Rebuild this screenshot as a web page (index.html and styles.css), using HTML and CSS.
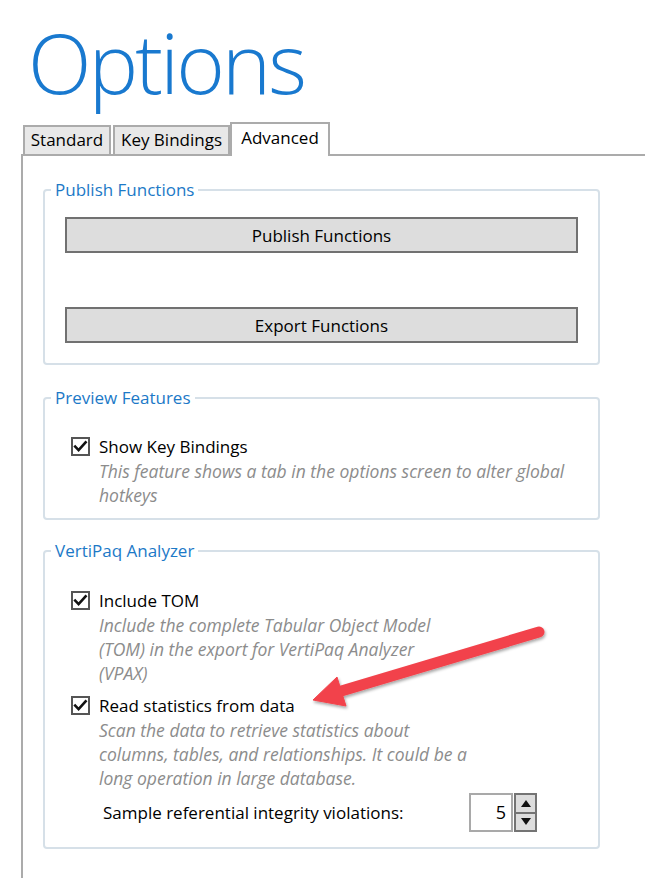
FILE: index.html
```html
<!DOCTYPE html>
<html>
<head>
<meta charset="utf-8">
<link rel="stylesheet" href="styles.css">
</head>
<body>
<div class="page">
  <div class="title-block"><h1 class="title">Options</h1></div>
  <div class="tabs">
    <div class="tab tab-standard">Standard</div>
    <div class="tab tab-keys">Key Bindings</div>
    <div class="tab tab-adv active">Advanced</div>
  </div>
  <div class="panel">
    <fieldset class="group group-publish">
      <legend>Publish Functions</legend>
      <button class="btn btn-first">Publish Functions</button>
      <button class="btn btn-second">Export Functions</button>
    </fieldset>

    <fieldset class="group group-preview">
      <legend>Preview Features</legend>
      <div class="opt opt-first">
        <div class="opt-row">
          <span class="check"><svg viewBox="0 0 15 15" width="15" height="15"><path d="M2.2 7.6 L5.6 11.2 L12.6 3.4" fill="none" stroke="#111" stroke-width="2.6" stroke-linecap="square"/></svg></span>
          <span class="opt-label">Show Key Bindings</span>
        </div>
        <div class="desc">This feature shows a tab in the options screen to alter global<br>hotkeys</div>
      </div>
    </fieldset>

    <fieldset class="group group-vpaq">
      <legend>VertiPaq Analyzer</legend>
      <div class="opt opt-first">
        <div class="opt-row">
          <span class="check"><svg viewBox="0 0 15 15" width="15" height="15"><path d="M2.2 7.6 L5.6 11.2 L12.6 3.4" fill="none" stroke="#111" stroke-width="2.6" stroke-linecap="square"/></svg></span>
          <span class="opt-label">Include TOM</span>
        </div>
        <div class="desc">Include the complete Tabular Object Model<br>(TOM) in the export for VertiPaq Analyzer<br>(VPAX)</div>
      </div>
      <div class="opt opt-next">
        <div class="opt-row">
          <span class="check"><svg viewBox="0 0 15 15" width="15" height="15"><path d="M2.2 7.6 L5.6 11.2 L12.6 3.4" fill="none" stroke="#111" stroke-width="2.6" stroke-linecap="square"/></svg></span>
          <span class="opt-label">Read statistics from data</span>
        </div>
        <div class="desc">Scan the data to retrieve statistics about<br>columns, tables, and relationships. It could be a<br>long operation in large database.</div>
      </div>
      <div class="sample-row">
        <span class="sample-label">Sample referential integrity violations:</span>
        <span class="spin-value">5</span>
        <span class="spin-buttons">
          <span class="spin-btn spin-up"><svg viewBox="0 0 10 7" width="10" height="7"><path d="M0 7 L5 0 L10 7 Z" fill="#111"/></svg></span>
          <span class="spin-btn spin-down"><svg viewBox="0 0 10 7" width="10" height="7"><path d="M0 0 L5 7 L10 0 Z" fill="#111"/></svg></span>
        </span>
      </div>
    </fieldset>
  </div>

  <svg class="arrow" width="645" height="878" viewBox="0 0 645 878">
    <defs>
      <filter id="sh" x="-20%" y="-20%" width="140%" height="140%">
        <feDropShadow dx="1" dy="2" stdDeviation="1.6" flood-color="#000" flood-opacity="0.35"/>
      </filter>
    </defs>
    <g filter="url(#sh)" fill="#f2434b" stroke="#f2434b">
      <line x1="539" y1="632" x2="338" y2="692" stroke-width="11" stroke-linecap="round"/>
      <polygon points="313,700 337,677 346,706" stroke-width="1" stroke-linejoin="round"/>
    </g>
  </svg>
</div>
</body>
</html>
```
FILE: styles.css
```css
html, body {
  margin: 0;
  padding: 0;
  height: 100%;
  background: #ffffff;
  overflow: hidden;
}
body {
  font-family: "Open Sans", "Liberation Sans", sans-serif;
  font-size: 17px;
  color: #000;
}
.page {
  position: relative;
  height: 100%;
  display: flex;
  flex-direction: column;
}
.title-block {
  height: 122px;
  box-sizing: border-box;
  padding: 12px 0 0 28px;
  flex: none;
}
.title {
  margin: 0;
  font-family: "Open Sans", sans-serif;
  font-weight: 300;
  font-size: 83px;
  line-height: 100px;
  color: #1979cf;
  letter-spacing: -2.8px;
}
.tabs {
  display: flex;
  align-items: flex-end;
  padding-left: 23px;
  flex: none;
}
.tab {
  box-sizing: border-box;
  height: 29px;
  border: 2px solid #ababab;
  border-bottom: none;
  background: #e8e8e8;
  text-align: center;
  line-height: 26px;
  font-size: 17px;
}
.tab-standard { width: 88px; margin-right: 2px; }
.tab-keys { width: 117px; }
.tab.active {
  width: 100px;
  height: 34px;
  margin-bottom: -2px;
  background: #fff;
  position: relative;
  z-index: 1;
  line-height: 27px;
}
.panel {
  flex: 1;
  margin-left: 21px;
  border-left: 2px solid #ababab;
  border-top: 2px solid #ababab;
  padding: 22px 0 0 20px;
}
.group {
  box-sizing: border-box;
  width: 557px;
  margin: 0;
  border: 2px solid #d6e0e8;
  border-radius: 4px;
  padding: 0 18px 20px 20px;
  min-inline-size: 0;
}
.group legend {
  margin-left: -14px;
  padding: 0 4px;
  line-height: 24px;
  font-size: 17px;
  color: #1c79c7;
}
.btn {
  display: block;
  box-sizing: border-box;
  width: 513px;
  height: 36px;
  border: 2px solid #717171;
  background: #dddddd;
  font-family: inherit;
  font-size: 17px;
  color: #000;
  padding: 0;
  margin: 0;
}
.btn-first { margin-top: 15px; }
.btn-second { margin-top: 54px; }

.group-preview { margin-top: 21px; padding-bottom: 11px; }
.group-vpaq { margin-top: 19px; padding-bottom: 15px; }

.opt { padding-left: 6px; }
.group-preview .opt-first { padding-top: 24px; }
.group-vpaq .opt-first { padding-top: 25px; }
.opt-next { margin-top: 8px; }
.opt-row {
  display: flex;
  align-items: center;
  height: 24px;
}
.check {
  box-sizing: border-box;
  width: 19px;
  height: 19px;
  border: 2px solid #555;
  background: #fff;
  display: flex;
  align-items: center;
  justify-content: center;
  margin-right: 9px;
}
.check svg { display: block; }
.opt-label { font-size: 17px; }
.desc {
  margin-top: 1px;
  padding-left: 28px;
  font-style: italic;
  color: #8c8c8c;
  line-height: 24px;
  font-size: 17.5px;
}
.sample-row {
  display: flex;
  align-items: center;
  margin-top: 3px;
  height: 39px;
}
.sample-label {
  width: 404px;
  padding-left: 38px;
  box-sizing: border-box;
  flex: none;
}
.spin-value {
  box-sizing: border-box;
  width: 44px;
  height: 39px;
  border: 2px solid #a9a9a9;
  text-align: right;
  padding-right: 5px;
  line-height: 35px;
  font-size: 18px;
}
.spin-buttons {
  box-sizing: border-box;
  margin-left: 1px;
  width: 23px;
  height: 39px;
  border: 2px solid #747474;
  display: flex;
  flex-direction: column;
  gap: 2px;
  background: #747474;
}
.spin-btn {
  flex: 1;
  background: #dddddd;
  display: flex;
  align-items: center;
  justify-content: center;
}
.spin-btn svg { display: block; }
.arrow {
  position: absolute;
  left: 0;
  top: 0;
  pointer-events: none;
}
```
